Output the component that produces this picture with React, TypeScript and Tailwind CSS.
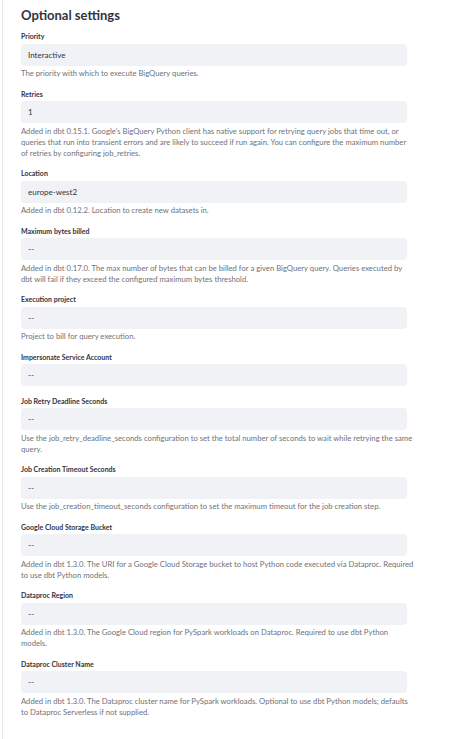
const fields: { label: string; value: string; desc?: string }[] = [
  { label: 'Priority', value: 'Interactive', desc: 'The priority with which to execute BigQuery queries.' },
  {
    label: 'Retries',
    value: '1',
    desc: "Added in dbt 0.15.1. Google's BigQuery Python client has native support for retrying query jobs that time out, or queries that run into transient errors and are likely to succeed if run again. You can configure the maximum number of retries by configuring job_retries.",
  },
  { label: 'Location', value: 'europe-west2', desc: 'Added in dbt 0.12.2. Location to create new datasets in.' },
  {
    label: 'Maximum bytes billed',
    value: '--',
    desc: 'Added in dbt 0.17.0. The max number of bytes that can be billed for a given BigQuery query. Queries executed by dbt will fail if they exceed the configured maximum bytes threshold.',
  },
  { label: 'Execution project', value: '--', desc: 'Project to bill for query execution.' },
  { label: 'Impersonate Service Account', value: '--' },
  {
    label: 'Job Retry Deadline Seconds',
    value: '--',
    desc: 'Use the job_retry_deadline_seconds configuration to set the total number of seconds to wait while retrying the same query.',
  },
  {
    label: 'Job Creation Timeout Seconds',
    value: '--',
    desc: 'Use the job_creation_timeout_seconds configuration to set the maximum timeout for the job creation step.',
  },
  {
    label: 'Google Cloud Storage Bucket',
    value: '--',
    desc: 'Added in dbt 1.3.0. The URI for a Google Cloud Storage bucket to host Python code executed via Dataproc. Required to use dbt Python models.',
  },
  {
    label: 'Dataproc Region',
    value: '--',
    desc: 'Added in dbt 1.3.0. The Google Cloud region for PySpark workloads on Dataproc. Required to use dbt Python models.',
  },
  {
    label: 'Dataproc Cluster Name',
    value: '--',
    desc: 'Added in dbt 1.3.0. The Dataproc cluster name for PySpark workloads. Optional to use dbt Python models; defaults to Dataproc Serverless if not supplied.',
  },
];

function Field({ label, value, desc }: { label: string; value: string; desc?: string }) {
  return (
    <div className="mb-[9.5px]">
      <div className="text-[7px] leading-[10px] font-bold text-[#31333f]">{label}</div>
      <div className="mt-[2.5px] h-[22px] w-[386px] rounded-[4px] bg-[#f0f2f6] px-[7px] flex items-center text-[8px] text-[#31333f]">
        {value}
      </div>
      {desc && <p className="mt-[2.5px] w-[393px] text-[7.7px] leading-[11px] text-[#707179]">{desc}</p>}
    </div>
  );
}

export default function App() {
  return (
    <div className="min-h-[739px] bg-white pl-[2px] font-['Lato',sans-serif]">
      <div className="min-h-[739px] border-l border-[#e6e7eb] pl-[18px]">
        <div className="pt-[5px]">
          <h2 className="text-[13px] leading-[20px] font-bold text-[#31333f] mb-[6px]">Optional settings</h2>
          {fields.map((f) => (
            <Field key={f.label} {...f} />
          ))}
        </div>
      </div>
    </div>
  );
}
